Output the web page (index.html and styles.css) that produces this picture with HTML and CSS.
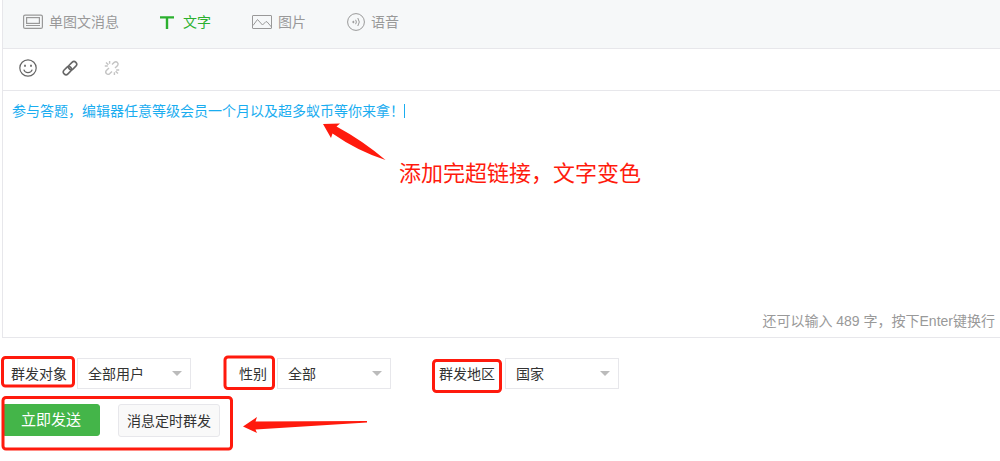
FILE: index.html
```html
<!DOCTYPE html>
<html lang="zh-CN">
<head>
  <meta charset="UTF-8">
  <meta name="viewport" content="width=device-width, initial-scale=1.0">
  <title>群发消息</title>
  <link rel="stylesheet" href="styles.css">
</head>
<body>

  <main>
    <div class="editor">
      <div class="tabs">
        <button type="button" class="tab">
          <svg width="20" height="16" viewBox="0 0 20 16" fill="none" stroke="currentColor">
            <rect x="0.6" y="1.1" width="18.8" height="13.3" rx="1.5" stroke-width="1.2"/>
            <rect x="3.6" y="3.6" width="12.8" height="5.8" stroke-width="1.2"/>
            <path d="M3 11.5h14"/>
          </svg>
          单图文消息
        </button>
        <button type="button" class="tab active">
          <svg width="14" height="14" viewBox="0 0 14 14" fill="none" stroke="currentColor" stroke-width="2.4">
            <path d="M0 2.4h14M7 2.4V14"/>
          </svg>
          文字
        </button>
        <button type="button" class="tab">
          <svg width="20" height="16" viewBox="0 0 20 16" fill="none" stroke="currentColor">
            <rect x="0.5" y="1.5" width="19" height="13" rx="0.5"/>
            <path d="M1 11.5L5.5 5.500l5 5.500 3.500-3.500 1.200.5 4.300 5"/>
          </svg>
          图片
        </button>
        <button type="button" class="tab">
          <svg width="18" height="18" viewBox="0 0 18 18" fill="none" stroke="currentColor">
            <circle cx="9" cy="9" r="8.4"/>
            <path d="M8.6 6.800q1.600 2.200 0 4.400M10.800 5q3 4 0 8"/>
            <path d="M6.200 7.500L7.600 9 6.200 10.500 5.200 9z" fill="currentColor" stroke="none"/>
          </svg>
          语音
        </button>
      </div>

      <div class="toolbar">
        <button type="button" class="tool" aria-label="表情">
          <svg width="18" height="18" viewBox="0 0 18 18" fill="none" stroke="currentColor" stroke-width="1.2">
            <circle cx="9" cy="9" r="8.2"/>
            <path d="M4.8 10.6q1 3 4.200 3t4.200-3"/>
            <path d="M6 5.8v2M12 5.8v2" stroke-width="1.7"/>
          </svg>
        </button>
        <button type="button" class="tool" aria-label="超链接">
          <svg width="16" height="16" viewBox="0 0 16 16" fill="none" stroke="currentColor" stroke-width="1.6">
            <rect x="-4.6" y="-2.7" width="9.2" height="5.4" rx="2.7" transform="translate(10.6 5.6) rotate(-45)"/>
            <rect x="-4.6" y="-2.7" width="9.2" height="5.4" rx="2.7" transform="translate(5.4 10.6) rotate(-45)"/>
          </svg>
        </button>
        <button type="button" class="tool" aria-label="取消超链接" disabled>
          <svg width="16" height="16" viewBox="0 0 16 16" fill="none" stroke="currentColor" stroke-width="1.4">
            <path d="M8 4.400l2.200-2q1.800-1.300 3.200 0t.2 3.200L11 8M5 8l-2.600 2.400q-1.400 1.800 0 3.200t3.200.2L8 11.400"/>
            <path d="M5.600 1v2.800M2 2.400l2.400 2.400M.8 6h3M10.400 15v-2.800M14 13.600l-2.400-2.400M15.200 10h-3"/>
          </svg>
        </button>
      </div>

      <div class="content" contenteditable="true" role="textbox" aria-label="正文" spellcheck="false"><a href="#">参与答题，编辑器任意等级会员一个月以及超多蚁币等你来拿！</a><span class="caret"></span></div>
      <div class="count">还可以输入 489 字，按下Enter键换行</div>
    </div>

    <form class="send">
      <div class="filters">
        <div class="field">
          <label for="target">群发对象</label>
          <div class="select">
            <select id="target">
              <option>全部用户</option>
            </select>
          </div>
        </div>
        <div class="field">
          <label for="gender">性别</label>
          <div class="select">
            <select id="gender">
              <option>全部</option>
            </select>
          </div>
        </div>
        <div class="field">
          <label for="area">群发地区</label>
          <div class="select">
            <select id="area">
              <option>国家</option>
            </select>
          </div>
        </div>
      </div>
      <div class="actions">
        <button type="button" class="btn primary">立即发送</button>
        <button type="button" class="btn">消息定时群发</button>
      </div>
    </form>

    <!-- red notes drawn over the page -->
    <svg class="marks" width="640" height="461" viewBox="0 0 640 461" aria-hidden="true">
      <g fill="none" stroke="#ff1a0d" stroke-width="3">
        <rect x="2.5" y="357.5" width="71" height="28.5" rx="3"/>
        <rect x="225" y="357" width="48.5" height="31.5" rx="3"/>
        <rect x="433.5" y="360.5" width="67" height="31" rx="3"/>
        <rect x="3" y="397.5" width="228.5" height="51.5" rx="3"/>
      </g>
      <g fill="#ff1a0d">
        <path d="M323 124l17-.5-3.500 3q26 14 49 33.500-28-9-53-26.500l-1.500 4.500z"/>
        <path d="M243 426.500l14-9.500-1.500 4.500L367 421v1.500q-56 3.500-111.500 7l1.500 3.500z"/>
      </g>
    </svg>
    <p class="note">添加完超链接，文字变色</p>
  </main>

</body>
</html>
```
FILE: styles.css
```css
* {
  box-sizing: border-box;
}

body {
  margin: 0;
  background: #fff;
  color: #333;
  font-family: "Liberation Sans", "Noto Sans CJK SC", sans-serif;
  font-size: 14px;
  line-height: 20px;
}

button,
select {
  font: inherit;
  color: inherit;
}

main {
  position: relative;
  padding: 0 0 24px 2px;
}

.editor {
  border-left: 1px solid #e7e7eb;
  border-bottom: 1px solid #e7e7eb;
}

.tabs {
  display: flex;
  align-items: center;
  gap: 41px;
  height: 49px;
  padding: 0 20px 4px;
  background: #f6f8f9;
  border-bottom: 1px solid #e7e7eb;
}

.tab {
  display: flex;
  align-items: center;
  gap: 6px;
  padding: 0;
  border: 0;
  background: none;
  color: #999;
  cursor: pointer;
}

.tab.active {
  gap: 9px;
  color: #2bb02f;
}

.toolbar {
  display: flex;
  align-items: center;
  gap: 24px;
  height: 42px;
  padding: 0 16px 4px;
  border-bottom: 1px solid #e7e7eb;
}

.tool {
  display: flex;
  padding: 0;
  width: 18px;
  justify-content: center;
  border: 0;
  background: none;
  color: #666;
  cursor: pointer;
}

.tool:disabled {
  color: #c4c4c4;
  cursor: default;
}

.content {
  height: 220px;
  padding: 10px 9px;
  outline: none;
}

.content a {
  color: #1aadf0;
  text-decoration: none;
}

.caret {
  display: inline-block;
  height: 14px;
  border-left: 1px solid #1aadf0;
  vertical-align: -2px;
}

.count {
  padding: 0 5px 6px;
  color: #999;
  text-align: right;
}

.send {
  padding-top: 20px;
}

.filters {
  display: flex;
  gap: 48px;
  padding-left: 9px;
}

.field {
  display: flex;
  align-items: center;
  gap: 10px;
}

.select {
  position: relative;
}

.select::after {
  content: "";
  position: absolute;
  top: 13px;
  right: 9px;
  border: 5px solid transparent;
  border-top-color: #bbb;
  border-bottom: 0;
  pointer-events: none;
}

select {
  display: block;
  width: 114px;
  height: 31px;
  padding: 0 10px;
  border: 1px solid #e7e7eb;
  border-radius: 0;
  background: #fff;
  appearance: none;
}

.actions {
  display: flex;
  align-items: flex-start;
  gap: 18px;
  padding-top: 15px;
}

.btn {
  height: 33px;
  padding: 0 8px;
  border: 1px solid #e7e7eb;
  border-radius: 3px;
  background: #f9f9f9;
  cursor: pointer;
}

.btn.primary {
  height: 32px;
  padding: 0 18px;
  border-color: #44b549;
  background: #44b549;
  color: #fff;
  font-size: 15px;
}

.marks {
  position: absolute;
  top: 0;
  left: 0;
  pointer-events: none;
}

.note {
  position: absolute;
  top: 158px;
  left: 399px;
  margin: 0;
  color: #ff1a0d;
  font-size: 22px;
  line-height: 32px;
}
```
